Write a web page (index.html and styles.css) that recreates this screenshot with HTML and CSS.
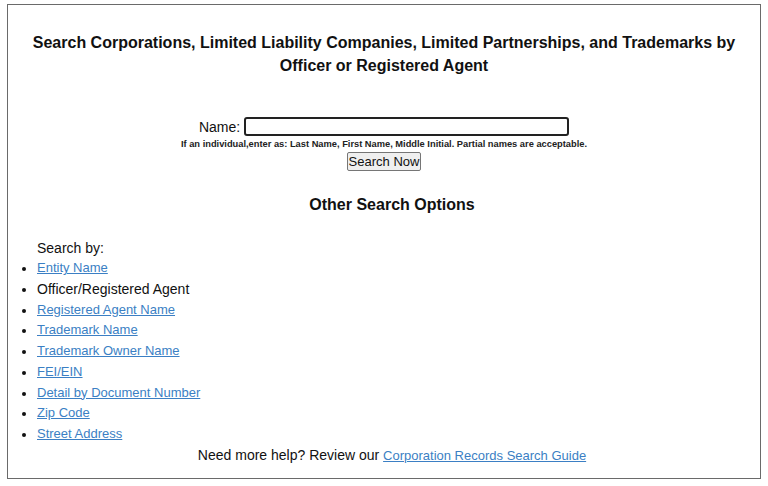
FILE: index.html
```html
<!DOCTYPE html>
<html>
<head>
<meta charset="utf-8">
<link rel="stylesheet" href="styles.css">
</head>
<body>
<div class="box">
  <h1 class="title">Search Corporations, Limited Liability Companies, Limited Partnerships, and Trademarks by Officer or Registered Agent</h1>
  <form class="search">
    <div class="name-row">
      <label for="n">Name:</label>
      <input id="n" type="text" class="name-input">
    </div>
    <div class="hint">If an individual,enter as: Last Name, First Name, Middle Initial. Partial names are acceptable.</div>
    <button type="button" class="btn">Search Now</button>
  </form>
  <h2 class="other">Other Search Options</h2>
  <div class="searchby">Search by:</div>
  <ul class="options">
    <li><a href="#">Entity Name</a></li>
    <li>Officer/Registered Agent</li>
    <li><a href="#">Registered Agent Name</a></li>
    <li><a href="#">Trademark Name</a></li>
    <li><a href="#">Trademark Owner Name</a></li>
    <li><a href="#">FEI/EIN</a></li>
    <li><a href="#">Detail by Document Number</a></li>
    <li><a href="#">Zip Code</a></li>
    <li><a href="#">Street Address</a></li>
  </ul>
  <p class="help">Need more help? Review our <a href="#">Corporation Records Search Guide</a></p>
</div>
</body>
</html>
```
FILE: styles.css
```css
html, body {
  margin: 0;
  padding: 0;
  background: #fff;
}
body {
  font-family: "Liberation Sans", Arial, sans-serif;
  color: #111;
  padding: 4px 7px 0 7px;
}
.box {
  width: 752px;
  height: 473px;
  border: 1px solid #6a6a6a;
  box-sizing: content-box;
}
.title {
  font-size: 16px;
  font-weight: bold;
  text-align: center;
  line-height: 23px;
  margin: 26px 20px 0 20px;
}
.search {
  margin-top: 40px;
  display: flex;
  flex-direction: column;
  align-items: center;
}
.name-row {
  display: flex;
  align-items: center;
  gap: 4px;
  font-size: 14px;
}
.name-input {
  width: 317px;
  height: 13px;
  border: 2px solid #222;
  border-radius: 3px;
  padding: 1px 2px;
  margin: 0;
}
.hint {
  font-size: 9.3px;
  font-weight: bold;
  margin-top: 3px;
  color: #222;
}
.btn {
  margin-top: 3px;
  font-family: "Liberation Sans", Arial, sans-serif;
  font-size: 13px;
  padding: 1px 1px;
  height: 19px;
  background: #efefef;
  border: 1px solid #767676;
  border-radius: 2px;
  color: #111;
}
.other {
  font-size: 16px;
  font-weight: bold;
  text-align: center;
  margin: 24px 0 0 0;
  padding-left: 16px;
  line-height: 20px;
}
.searchby {
  font-size: 14px;
  margin: 23px 0 0 29px;
  line-height: 20px;
}
.options {
  margin: 0;
  padding-left: 29px;
  font-size: 14px;
}
.options li {
  height: 20.75px;
  line-height: 20.75px;
}
a {
  color: #3b7fc4;
  font-size: 13px;
  vertical-align: top;
}
.help {
  text-align: center;
  font-size: 14px;
  margin: 0;
  padding-left: 16px;
  height: 21px;
  line-height: 21px;
}
```
